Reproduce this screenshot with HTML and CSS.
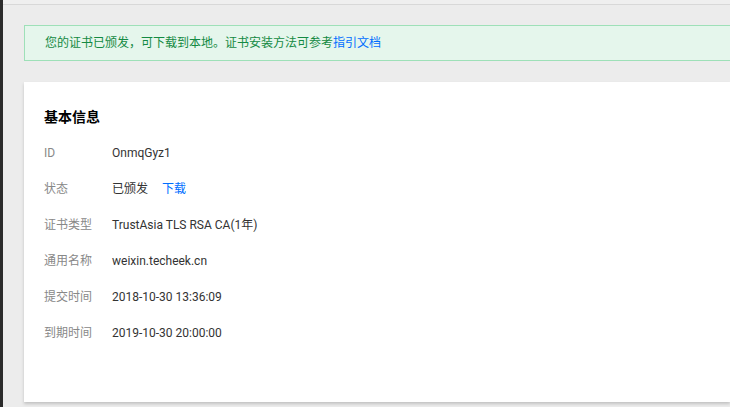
FILE: index.html
```html
<!DOCTYPE html>
<html lang="zh-CN">
<head>
<meta charset="utf-8">
<link rel="stylesheet" href="styles.css">
</head>
<body>
<div class="app">
  <div class="side"></div>
  <div class="main">
    <div class="topbar"></div>
    <div class="content">
      <div class="notice">您的证书已颁发，可下载到本地。证书安装方法可参考<a class="link" href="#">指引文档</a></div>
      <div class="card">
        <h3 class="title">基本信息</h3>
        <div class="row"><span class="label">ID</span><span class="value">OnmqGyz1</span></div>
        <div class="row"><span class="label">状态</span><span class="value">已颁发<a class="link dl" href="#">下载</a></span></div>
        <div class="row"><span class="label">证书类型</span><span class="value">TrustAsia TLS RSA CA(1年)</span></div>
        <div class="row"><span class="label">通用名称</span><span class="value">weixin.techeek.cn</span></div>
        <div class="row"><span class="label">提交时间</span><span class="value">2018-10-30 13:36:09</span></div>
        <div class="row"><span class="label">到期时间</span><span class="value">2019-10-30 20:00:00</span></div>
      </div>
    </div>
  </div>
</div>
</body>
</html>
```
FILE: styles.css
```css
html, body {
  margin: 0;
  padding: 0;
  width: 730px;
  height: 407px;
  overflow: hidden;
  background: #ececec;
  font-family: Roboto, "Noto Sans CJK SC", sans-serif;
  font-size: 12px;
  color: #333;
}
.app {
  display: flex;
  height: 407px;
}
.side {
  width: 3px;
  flex: none;
  background: #2b2b2b;
}
.main {
  flex: 1;
  min-width: 0;
}
.topbar {
  height: 4px;
  background: #efefef;
  border-bottom: 1px solid #d8d8d8;
}
.content {
  padding: 20px 0 0 21px;
}
.notice {
  height: 34px;
  line-height: 34px;
  border: 1px solid #9ee0b8;
  border-right: none;
  background: #e5f6ec;
  color: #148a43;
  padding-left: 20px;
}
.link {
  color: #006eff;
  text-decoration: none;
}
.card {
  margin-top: 21px;
  background: #fff;
  padding: 17px 20px 51px;
  box-shadow: 0 2px 3px rgba(0,0,0,0.18);
}
.title {
  margin: 0;
  font-size: 14px;
  font-weight: bold;
  color: #000;
  line-height: 36px;
}
.row {
  display: flex;
  height: 36px;
  line-height: 36px;
}
.label {
  width: 68px;
  color: #888;
}
.value {
  color: #333;
}
.dl {
  margin-left: 14px;
}
```
